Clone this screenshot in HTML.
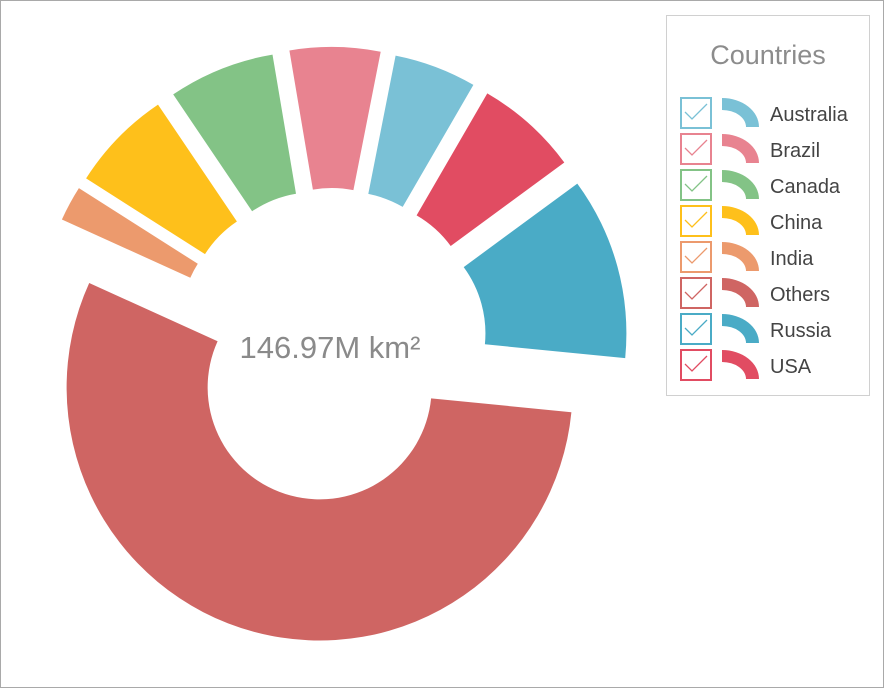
<!DOCTYPE html>
<html><head><meta charset="utf-8"><style>
html,body{margin:0;padding:0;background:#fff}
#f{position:relative;width:882px;height:686px;border:1px solid #a9a9a9;overflow:hidden;font-family:"Liberation Sans","DejaVu Sans",sans-serif}
</style></head><body><div id="f">
<svg width="884" height="688" viewBox="0 0 884 688" style="position:absolute;left:-1px;top:-1px">
<path fill="#EC9A6D" d="M61.9,219.5 A253,253 0 0 1 78.9,188.1 L197.8,263.8 A112,112 0 0 0 190.3,277.7 Z"/>
<path fill="#FEC01B" d="M86.1,178.4 A253,253 0 0 1 158.0,104.6 L236.9,221.5 A112,112 0 0 0 205.0,254.1 Z"/>
<path fill="#83C386" d="M173.2,94.4 A253,253 0 0 1 272.5,54.6 L296.0,193.7 A112,112 0 0 0 252.1,211.3 Z"/>
<path fill="#E88390" d="M289.4,50.5 A253,253 0 0 1 380.7,51.8 L353.4,190.1 A112,112 0 0 0 312.9,189.6 Z"/>
<path fill="#7AC1D6" d="M395.6,55.6 A253,253 0 0 1 473.4,84.9 L402.7,206.9 A112,112 0 0 0 368.3,193.9 Z"/>
<path fill="#E14C62" d="M487.3,93.4 A253,253 0 0 1 564.3,162.5 L450.7,246.0 A112,112 0 0 0 416.6,215.4 Z"/>
<path fill="#4AABC6" d="M577.3,183.6 A253,253 0 0 1 625.2,358.1 L484.9,344.3 A112,112 0 0 0 463.7,267.1 Z"/>
<path fill="#CF6563" d="M571.4,412.2 A253,253 0 1 1 89.2,283.0 L217.6,341.2 A112,112 0 1 0 431.1,398.4 Z"/>
<text x="330" y="358" text-anchor="middle" font-family="Liberation Sans, DejaVu Sans, sans-serif" font-size="31" fill="#8a8a8a">146.97M km²</text>
<rect x="666.5" y="15.5" width="203" height="380" fill="#fff" stroke="#d0d0d0"/>
<text x="768" y="64" text-anchor="middle" font-family="Liberation Sans, DejaVu Sans, sans-serif" font-size="27" fill="#8c8c8c">Countries</text>
<g font-family="Liberation Sans, DejaVu Sans, sans-serif" font-size="20" fill="#444">
<g transform="translate(0,0)"><rect x="681" y="98" width="30" height="30" fill="none" stroke="#7AC1D6" stroke-width="2"/><path d="M685,112 L692,119 L707,104" fill="none" stroke="#7AC1D6" stroke-width="1.3"/><path fill="#7AC1D6" d="M722,98 A37,29 0 0 1 759,127 L746,127 A24,17 0 0 0 722,110 Z"/><text x="770" y="121">Australia</text></g>
<g transform="translate(0,36)"><rect x="681" y="98" width="30" height="30" fill="none" stroke="#E88390" stroke-width="2"/><path d="M685,112 L692,119 L707,104" fill="none" stroke="#E88390" stroke-width="1.3"/><path fill="#E88390" d="M722,98 A37,29 0 0 1 759,127 L746,127 A24,17 0 0 0 722,110 Z"/><text x="770" y="121">Brazil</text></g>
<g transform="translate(0,72)"><rect x="681" y="98" width="30" height="30" fill="none" stroke="#83C386" stroke-width="2"/><path d="M685,112 L692,119 L707,104" fill="none" stroke="#83C386" stroke-width="1.3"/><path fill="#83C386" d="M722,98 A37,29 0 0 1 759,127 L746,127 A24,17 0 0 0 722,110 Z"/><text x="770" y="121">Canada</text></g>
<g transform="translate(0,108)"><rect x="681" y="98" width="30" height="30" fill="none" stroke="#FEC01B" stroke-width="2"/><path d="M685,112 L692,119 L707,104" fill="none" stroke="#FEC01B" stroke-width="1.3"/><path fill="#FEC01B" d="M722,98 A37,29 0 0 1 759,127 L746,127 A24,17 0 0 0 722,110 Z"/><text x="770" y="121">China</text></g>
<g transform="translate(0,144)"><rect x="681" y="98" width="30" height="30" fill="none" stroke="#EC9A6D" stroke-width="2"/><path d="M685,112 L692,119 L707,104" fill="none" stroke="#EC9A6D" stroke-width="1.3"/><path fill="#EC9A6D" d="M722,98 A37,29 0 0 1 759,127 L746,127 A24,17 0 0 0 722,110 Z"/><text x="770" y="121">India</text></g>
<g transform="translate(0,180)"><rect x="681" y="98" width="30" height="30" fill="none" stroke="#CF6563" stroke-width="2"/><path d="M685,112 L692,119 L707,104" fill="none" stroke="#CF6563" stroke-width="1.3"/><path fill="#CF6563" d="M722,98 A37,29 0 0 1 759,127 L746,127 A24,17 0 0 0 722,110 Z"/><text x="770" y="121">Others</text></g>
<g transform="translate(0,216)"><rect x="681" y="98" width="30" height="30" fill="none" stroke="#4AABC6" stroke-width="2"/><path d="M685,112 L692,119 L707,104" fill="none" stroke="#4AABC6" stroke-width="1.3"/><path fill="#4AABC6" d="M722,98 A37,29 0 0 1 759,127 L746,127 A24,17 0 0 0 722,110 Z"/><text x="770" y="121">Russia</text></g>
<g transform="translate(0,252)"><rect x="681" y="98" width="30" height="30" fill="none" stroke="#E14C62" stroke-width="2"/><path d="M685,112 L692,119 L707,104" fill="none" stroke="#E14C62" stroke-width="1.3"/><path fill="#E14C62" d="M722,98 A37,29 0 0 1 759,127 L746,127 A24,17 0 0 0 722,110 Z"/><text x="770" y="121">USA</text></g>
</g>
</svg>
</div></body></html>
